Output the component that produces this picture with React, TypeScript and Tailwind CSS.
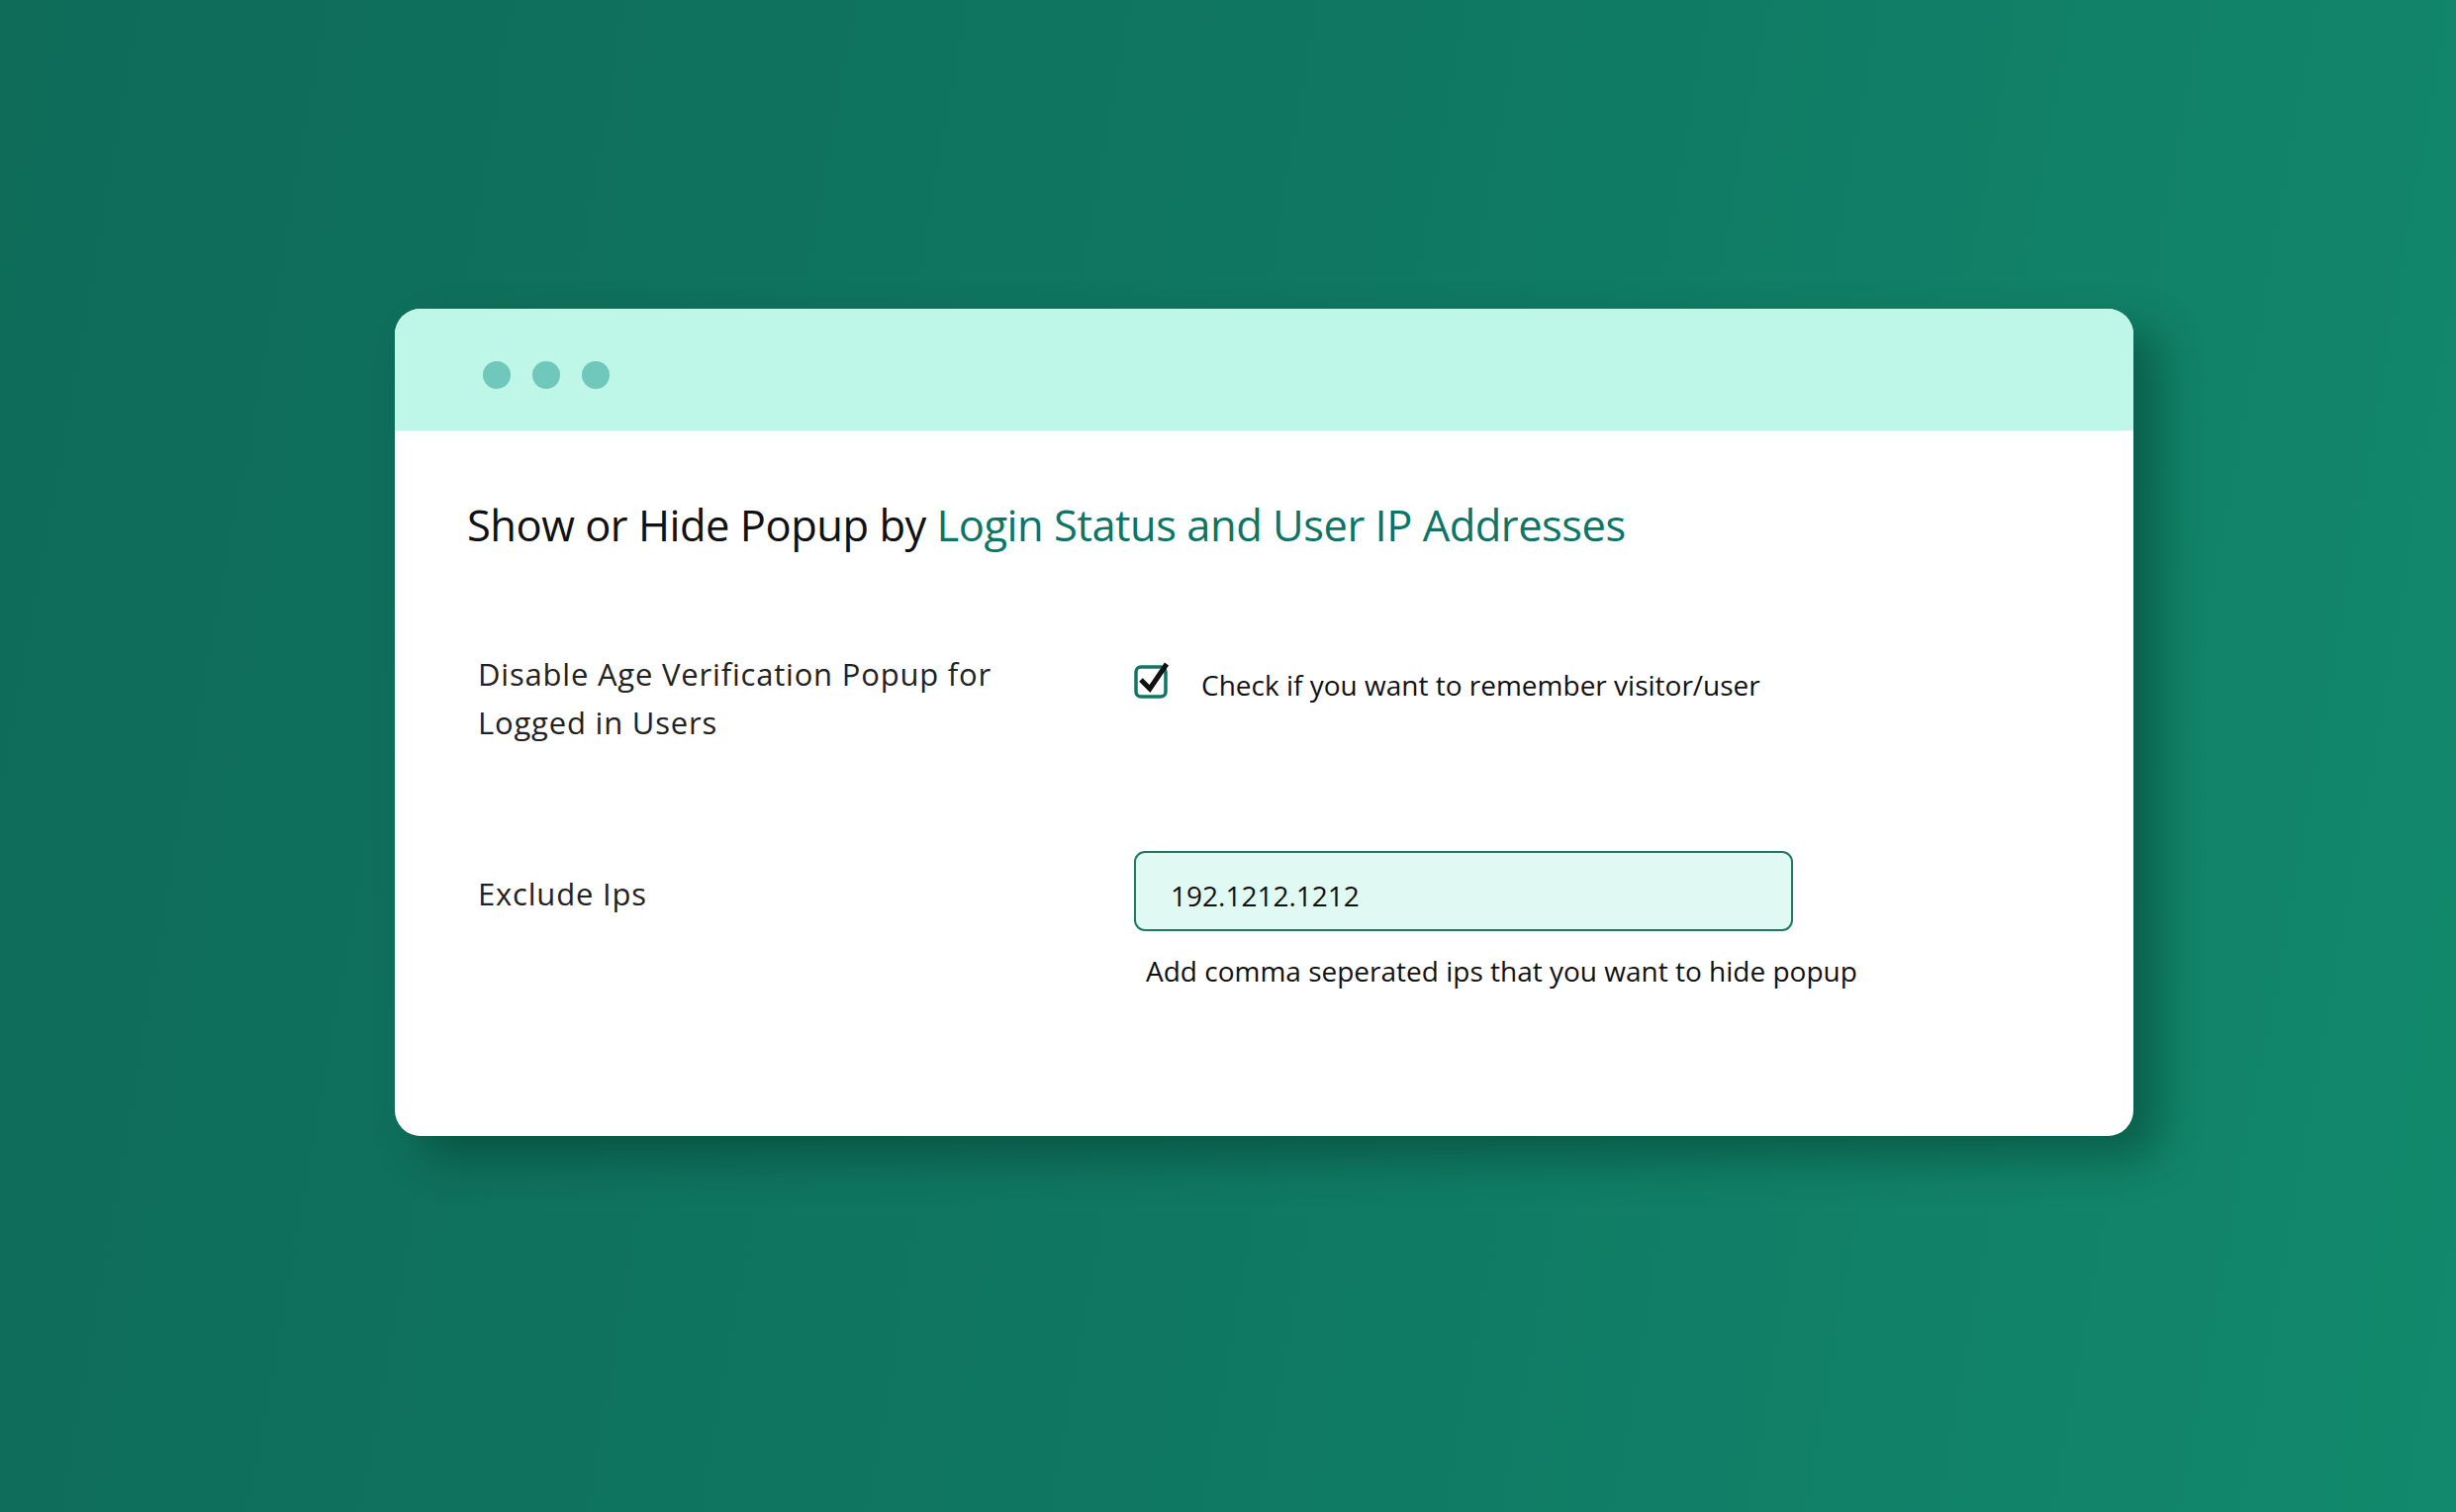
const font = { fontFamily: '"Open Sans", "Noto Sans", sans-serif' };

const CheckIcon = () => (
  <svg width="36" height="36" viewBox="0 0 36 36" className="shrink-0 overflow-visible">
    <rect x="2" y="2" width="30" height="30" rx="5" fill="white" stroke="#0f7566" strokeWidth="3.5" />
    <path d="M7 15 L16 24 L33 -1" fill="none" stroke="#111" strokeWidth="5" strokeLinejoin="miter" strokeLinecap="butt" />
  </svg>
);

const App = () => {
  return (
    <div
      className="w-full h-[1528px] overflow-hidden bg-[linear-gradient(100deg,#0e6c59_0%,#0f7762_50%,#12896c_100%)] pt-[312px] pl-[399px]"
      style={font}
    >
      <div className="w-[1757px] h-[836px] bg-white rounded-[26px] overflow-hidden shadow-[26px_22px_44px_rgba(0,40,30,0.4)]">
        {/* Window bar */}
        <div className="h-[123px] bg-[#bef6e8] flex items-start gap-[22px] pl-[89px] pt-[53px]">
          <span className="w-[28px] h-[28px] rounded-full bg-[#6fc8bb]" />
          <span className="w-[28px] h-[28px] rounded-full bg-[#6fc8bb]" />
          <span className="w-[28px] h-[28px] rounded-full bg-[#6fc8bb]" />
        </div>

        {/* Content */}
        <div className="pt-[69px]">
          <h2 className="pl-[73px] text-[43.5px] leading-[53px] text-[#111] tracking-[-0.5px]">
            Show or Hide Popup by <span className="text-[#0b7566]">Login Status and User IP Addresses</span>
          </h2>

          <div className="pl-[84px] mt-[100px]">
            <div className="flex">
              <div className="w-[663px] text-[31px] leading-[49px] text-[#222] tracking-[0.8px]">
                Disable Age Verification Popup for
                <br />
                Logged in Users
              </div>
              <div className="flex items-center gap-[32px] pt-[6px] h-[60px]">
                <CheckIcon />
                <span className="text-[28px] text-[#111] pt-[3px]">Check if you want to remember visitor/user</span>
              </div>
            </div>

            <div className="flex mt-[105px]">
              <div className="w-[663px] pt-[19px] text-[31px] leading-[49px] text-[#222] tracking-[0.8px]">Exclude Ips</div>
              <div className="flex flex-col">
                <div className="w-[666px] h-[81px] rounded-[11px] border-2 border-[#1a7d62] bg-[#e0f9f3] flex items-center pl-[35px] pt-[8px]">
                  <span className="text-[28px] text-[#111]">192.1212.1212</span>
                </div>
                <div className="mt-[22px] pl-[12px] text-[28px] leading-[36px] text-[#111]">
                  Add comma seperated ips that you want to hide popup
                </div>
              </div>
            </div>
          </div>
        </div>
      </div>
    </div>
  );
};

export default App;
